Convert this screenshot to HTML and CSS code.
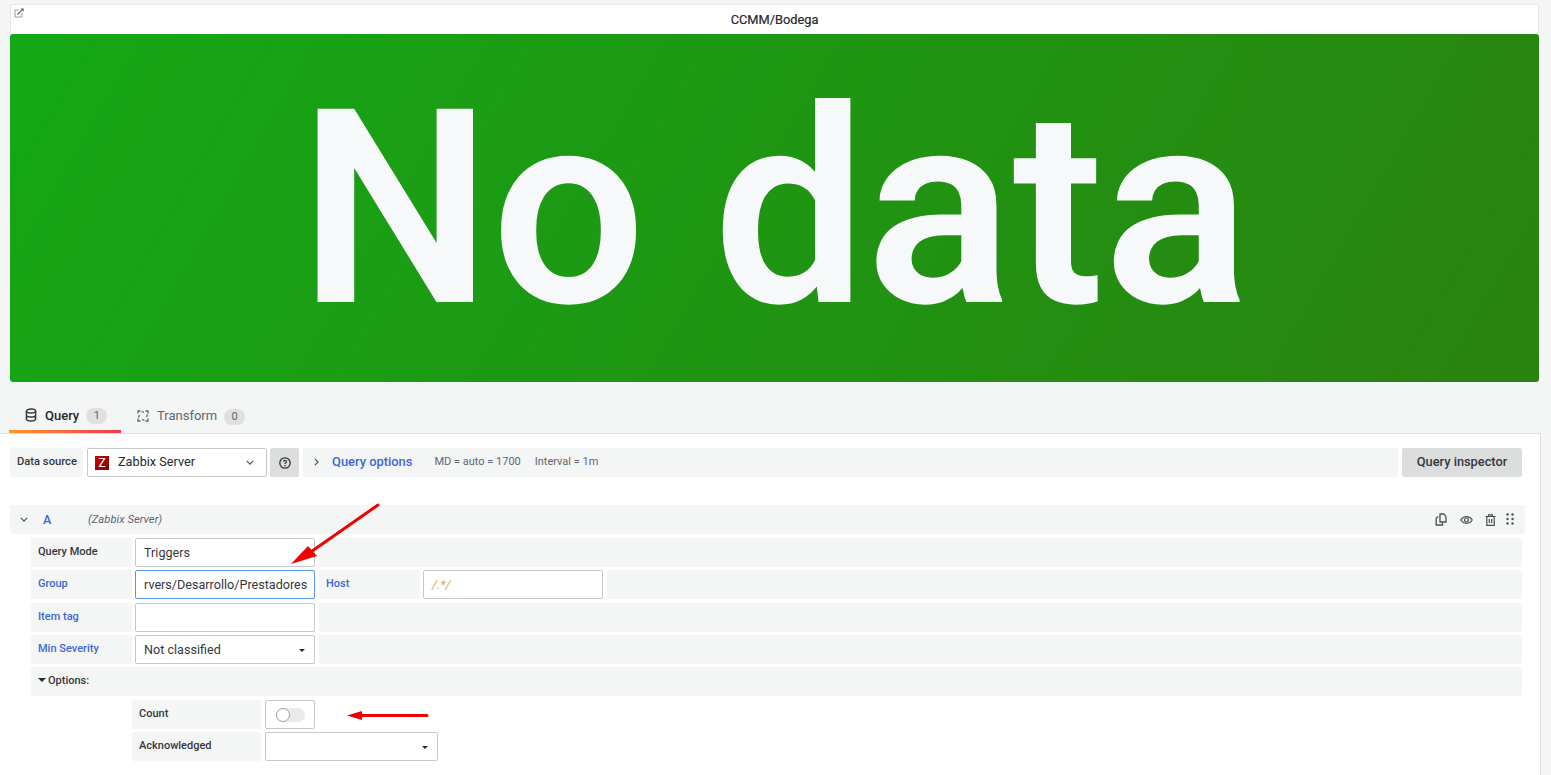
FILE: index.html
```html
<!DOCTYPE html>
<html lang="en">
<head>
<meta charset="utf-8">
<title>CCMM/Bodega</title>
<link rel="stylesheet" href="styles.css">
</head>
<body>
<section class="panel">
  <header class="panel-head">
    <svg class="ext-link" viewBox="0 0 10 10" width="10" height="10"><path d="M5 2H1v7h7V5" fill="none" stroke="#9a9aa2" stroke-width="1"/><path d="M3.5 6.5 8 2" stroke="#8a6a60" stroke-width="1.2"/><path d="M6.5 0.5H9.7V3.7Z" fill="#4a55b0"/></svg>
    <span class="panel-title">CCMM/Bodega</span>
  </header>
  <div class="stat">No data</div>
</section>

<nav class="tabs">
  <div class="tab active">
    <svg class="tab-icon" viewBox="0 0 12 14" width="12" height="14"><g fill="none" stroke="#34373c" stroke-width="1.4"><ellipse cx="6" cy="3" rx="4.6" ry="2"/><path d="M1.4 3v8c0 1.1 2 2 4.600 2s4.600-.9 4.600-2V3M1.400 7c0 1.100 2 2 4.600 2s4.600-.9 4.600-2"/></g></svg>
    <span class="tab-name">Query</span><span class="count">1</span>
  </div>
  <div class="tab">
    <svg class="tab-icon" viewBox="0 0 12 12" width="12" height="12"><g fill="none" stroke="#5f6670" stroke-width="1.300"><path d="M1 3.500V1h2.500M8.500 1H11v2.500M11 8.500V11H8.500M3.500 11H1V8.500"/><path d="M4.500 1.500 7 2.500M10.500 4.500 9.500 7M7.500 10.500 5 9.500M1.500 7.500 2.500 5"/></g></svg>
    <span class="tab-name">Transform</span><span class="count">0</span>
  </div>
</nav>

<main class="content">
  <div class="toolbar">
    <div class="label tool-label">Data source</div>
    <div class="ds-select">
      <span class="z-logo">Z</span>
      <span class="ds-name">Zabbix Server</span>
      <svg class="chev" viewBox="0 0 10 6" width="8" height="5"><path d="M1 1l4 4 4-4" fill="none" stroke="#4a4f56" stroke-width="1.400"/></svg>
    </div>
    <div class="help"><svg viewBox="0 0 12 12" width="12" height="12"><circle cx="6" cy="6" r="5.200" fill="none" stroke="#34373c" stroke-width="1.300"/><path d="M4.500 4.800c0-2 3-2 3 0 0 1.100-1.500 1-1.500 2.200" fill="none" stroke="#34373c" stroke-width="1.200"/><circle cx="6" cy="8.800" r=".8" fill="#34373c"/></svg></div>
    <div class="options-bar">
      <svg class="chev-right" viewBox="0 0 6 10" width="5" height="8"><path d="M1 1l4 4-4 4" fill="none" stroke="#4a4f56" stroke-width="1.400"/></svg>
      <span class="options-link">Query options</span>
      <span class="meta meta-md">MD = auto = 1700</span>
      <span class="meta">Interval = 1m</span>
    </div>
    <button class="inspector">Query inspector</button>
  </div>

  <div class="query-head">
    <svg class="chev-q" viewBox="0 0 10 6" width="8" height="5"><path d="M1 1l4 4 4-4" fill="none" stroke="#4a4f56" stroke-width="1.400"/></svg>
    <span class="query-letter">A</span>
    <em class="query-ds">(Zabbix Server)</em>
    <div class="query-actions">
      <svg viewBox="0 0 12 13" width="12" height="13"><g fill="none" stroke="#4a4f56" stroke-width="1.300"><path d="M5 1h2.500C9.500 1 11 2.800 11 4.800V9H5z"/><path d="M3.500 3.500 1.200 5V12H7.500V9.500"/></g></svg>
      <svg viewBox="0 0 13 10" width="13" height="10"><g fill="none" stroke="#4a4f56" stroke-width="1.200"><path d="M.8 5C3.500.6 9.500.6 12.200 5 9.500 9.400 3.500 9.400.8 5z"/><circle cx="6.500" cy="5" r="2"/></g></svg>
      <svg viewBox="0 0 11 12" width="11" height="12"><g fill="none" stroke="#4a4f56" stroke-width="1.200"><path d="M.5 2.500h10M3.500 2.500V.8h4v1.700M1.800 2.500V11.300H9.200V2.500M4.300 5v4M6.700 5v4"/></g></svg>
      <svg class="drag" viewBox="0 0 8 12" width="8" height="12"><g fill="#4a4f56"><circle cx="1.500" cy="1.500" r="1.200"/><circle cx="6.500" cy="1.500" r="1.200"/><circle cx="1.500" cy="6" r="1.200"/><circle cx="6.500" cy="6" r="1.200"/><circle cx="1.500" cy="10.500" r="1.200"/><circle cx="6.500" cy="10.500" r="1.200"/></g></svg>
    </div>
  </div>

  <div class="form">
    <div class="row">
      <div class="label field-label">Query Mode</div>
      <div class="input">Triggers</div>
      <div class="filler"></div>
    </div>
    <div class="row">
      <div class="label field-label link">Group</div>
      <div class="input focused">rvers/Desarrollo/Prestadores</div>
      <div class="label field-label link">Host</div>
      <div class="input regex">/.*/</div>
      <div class="filler"></div>
    </div>
    <div class="row row-gap">
      <div class="label field-label link">Item tag</div>
      <div class="input"></div>
      <div class="filler"></div>
    </div>
    <div class="row">
      <div class="label field-label link">Min Severity</div>
      <div class="input">Not classified<span class="caret"></span></div>
      <div class="filler"></div>
    </div>
    <div class="row">
      <div class="options-toggle"><span class="caret-small"></span>Options:</div>
    </div>
    <div class="row sub row-gap">
      <div class="label sub-label">Count</div>
      <div class="input switch-box"><span class="switch"><span class="knob"></span></span></div>
    </div>
    <div class="row sub">
      <div class="label sub-label">Acknowledged</div>
      <div class="input ack"><span class="caret"></span></div>
    </div>
  </div>
</main>

<svg class="arrows" viewBox="0 0 1551 775" width="1551" height="775">
  <path d="M378 505 305 556" stroke="#f00000" stroke-width="3" stroke-linecap="round"/>
  <path d="M291 564 308 546 317 556Z" fill="#f00000"/>
  <path d="M360 715.500H427" stroke="#f00000" stroke-width="3" stroke-linecap="round"/>
  <path d="M347 715.500 362 711V720Z" fill="#f00000"/>
</svg>
</body>
</html>
```
FILE: styles.css
```css
* { box-sizing: border-box; }
html, body { margin: 0; padding: 0; }
body {
  position: relative;
  width: 1551px;
  height: 775px;
  overflow: hidden;
  background: #f4f5f5;
  font-family: Roboto, "Liberation Sans", sans-serif;
  color: #24292e;
}
.panel {
  margin: 4px 0 0 10px;
  width: 1529px;
  height: 378px;
  display: flex;
  flex-direction: column;
}
.panel-head {
  position: relative;
  height: 30px;
  flex: none;
  background: #fff;
  border: 1px solid #e6e7e8;
  border-bottom: 0;
  border-radius: 3px 3px 0 0;
  display: flex;
  justify-content: center;
  align-items: center;
}
.ext-link { position: absolute; left: 3px; top: 3px; }
.panel-title { font-size: 12.800px; font-weight: 400; color: #24292e; -webkit-text-stroke: .2px #24292e; }
.stat {
  flex: 1;
  border-radius: 3px;
  background: linear-gradient(120deg, #14a816 0%, #2a830f 100%);
  color: #f7f8fa;
  font-size: 272px;
  font-weight: 600;
  line-height: 350px;
  text-align: center;
  overflow: hidden;
  white-space: nowrap;
}
.tabs {
  display: flex;
  height: 33px;
  margin: 18px 0 0 9px;
}
.tab {
  display: flex;
  align-items: center;
  width: 112px;
  padding-left: 16px;
  padding-bottom: 2px;
  font-size: 13px;
  color: #5f6670;
}
.tab + .tab { margin-left: 0; width: 130px; }
.tab.active {
  color: #24292e;
  font-weight: 500;
  border-bottom: 3px solid transparent;
  border-image: linear-gradient(90deg, #ff9830, #f2364d) 1;
  padding-bottom: 0;
}
.tab-icon { margin-right: 8px; }
.count {
  margin-left: 7px;
  min-width: 21px;
  height: 16px;
  border-radius: 8px;
  background: #dfe0e1;
  color: #5f6670;
  font-size: 11px;
  font-weight: 400;
  line-height: 16px;
  text-align: center;
  margin-top: 2px;
}
.content {
  width: 1541px;
  height: 342px;
  background: #fff;
  border-top: 1px solid #dfe0e1;
  border-right: 1px solid #dfe0e1;
  padding: 14px 0 0 10px;
}
.toolbar { display: flex; height: 29px; width: 1512px; }
.label {
  background: #f4f5f5;
  border-radius: 2px;
  font-size: 12px;
  font-weight: 500;
  display: flex;
  align-items: center;
  padding-left: 7px;
  color: #34383d;
}
.tool-label { width: 73px; margin-right: 4px; font-size: 11.200px; padding: 0 0 3px 7px; }
.ds-select {
  width: 180px;
  display: flex;
  align-items: center;
  border: 1px solid #c7c8ca;
  border-radius: 2px;
  padding: 0 12px 2px 7px;
  font-size: 12.700px;
  margin-right: 3px;
}
.z-logo {
  width: 14px;
  height: 14px;
  background: linear-gradient(135deg, #d40000, #7c0000);
  color: #fff;
  font-size: 12px;
  line-height: 14px;
  text-align: center;
  margin-right: 9px;
  margin-top: 2px;
}
.ds-name { flex: 1; }
.chev { margin-top: 2px; }
.help {
  width: 29px;
  margin-right: 4px;
  background: #dcdddd;
  border-radius: 2px;
  display: flex;
  align-items: center;
  justify-content: center;
}
.options-bar {
  width: 1095px;
  margin-right: 4px;
  background: #f4f5f5;
  border-radius: 2px;
  display: flex;
  align-items: center;
  padding: 0 0 2px 11px;
}
.options-link { margin-left: 13px; font-size: 12.900px; font-weight: 500; color: #3d67d8; }
.meta { font-size: 11px; color: #5f6670; margin-left: 14px; }
.meta-md { margin-left: 22px; }
.inspector {
  width: 120px;
  border: 0;
  border-radius: 2px;
  background: #dcdddd;
  color: #34383d;
  font-family: inherit;
  font-size: 12.800px;
  font-weight: 500;
  padding: 0 0 2px;
}
.query-head {
  display: flex;
  align-items: center;
  width: 1515px;
  height: 29px;
  margin-top: 28px;
  background: #f4f5f5;
  border-radius: 2px;
  padding-left: 10px;
}
.query-letter { margin-left: 15px; width: 45px; font-size: 12.500px; font-weight: 500; color: #3d67d8; }
.query-ds { font-size: 11.300px; color: #5f6670; }
.query-actions { margin-left: auto; display: flex; align-items: center; gap: 12px; padding-right: 11px; }
.query-actions svg:first-child { margin-right: 1px; margin-left: -1px; }
.drag { margin-left: -2px; margin-top: -2px; }
.form { margin: 4px 0 0 21px; width: 1491px; display: flex; flex-direction: column; gap: 3px; }
.row { display: flex; height: 29px; }
.row-gap { margin-top: 1px; }
.field-label { width: 101px; margin-right: 3px; padding-bottom: 3px; font-size: 11px; }
.link { color: #3d67d8; }
.input {
  width: 180px;
  margin-right: 4px;
  background: #fff;
  border: 1px solid #c7c8ca;
  border-radius: 2px;
  display: flex;
  align-items: center;
  padding: 0 8px;
  font-size: 12.600px;
  white-space: nowrap;
  overflow: hidden;
  position: relative;
  color: #34383d;
}
.focused { border-color: #5794f2; }
.regex { color: #e0a850; font-style: italic; }
.filler { flex: 1; background: #f4f5f5; border-radius: 2px; }
.caret {
  position: absolute;
  right: 9px;
  top: 13px;
  border: 3.500px solid transparent;
  border-top: 3.500px solid #24292e;
  border-bottom: 0;
}
.options-toggle {
  flex: 1;
  display: flex;
  align-items: center;
  background: #f4f5f5;
  border-radius: 2px;
  padding: 0 0 3px 7px;
  font-size: 11px;
  font-weight: 500;
  color: #34383d;
}
.caret-small {
  border: 4px solid transparent;
  border-top: 4px solid #24292e;
  border-bottom: 0;
  margin-right: 2px;
}
.sub { padding-left: 101px; }
.sub-label { width: 129px; margin-right: 4px; padding-bottom: 3px; font-size: 11px; }
.switch-box { width: 50px; padding: 0 0 0 10px; }
.switch {
  position: relative;
  width: 29px;
  height: 14px;
  border-radius: 7px;
  background: #e9eaeb;
}
.knob {
  position: absolute;
  left: 0;
  top: 0;
  width: 14px;
  height: 14px;
  border-radius: 50%;
  background: #fff;
  border: 1px solid #9fa1a4;
}
.ack { width: 173px; }
.arrows { position: absolute; left: 0; top: 0; pointer-events: none; }
```
